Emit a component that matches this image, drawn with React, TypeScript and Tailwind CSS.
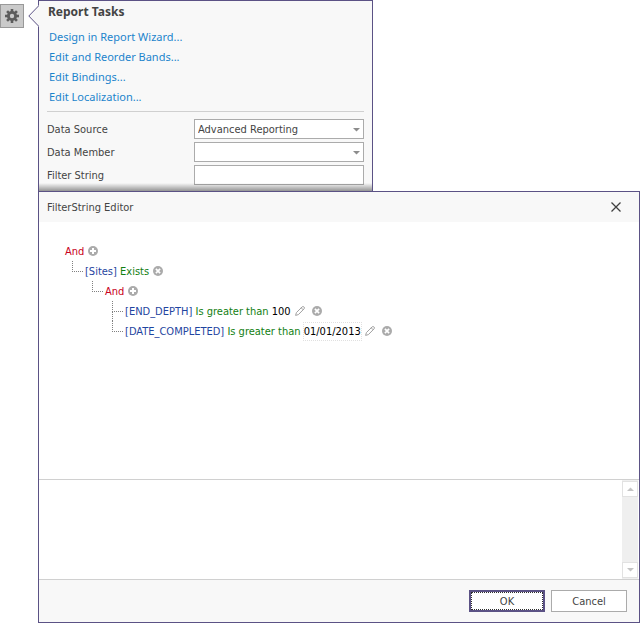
import React from "react";

const FONT = "font-['DejaVu_Sans_Condensed','DejaVu_Sans',sans-serif]";

function GearIcon() {
  return (
    <svg width="16" height="16" viewBox="0 0 16 16" aria-hidden="true">
      <g fill="#5c5c5c">
        {[0, 45, 90, 135].map((angle) => (
          <rect key={angle} x="6.7" y="1" width="2.6" height="14" transform={`rotate(${angle} 8 8)`} />
        ))}
        <circle cx="8" cy="8" r="5" />
      </g>
      <circle cx="8" cy="8" r="2.2" fill="#cacaca" />
    </svg>
  );
}

function AddIcon() {
  return (
    <svg width="10" height="10" viewBox="0 0 10 10" aria-hidden="true">
      <circle cx="5" cy="5" r="5" fill="#ababab" />
      <path d="M5 2v6M2 5h6" stroke="#fff" strokeWidth="2" />
    </svg>
  );
}

function RemoveIcon() {
  return (
    <svg width="10" height="10" viewBox="0 0 10 10" aria-hidden="true">
      <circle cx="5" cy="5" r="5" fill="#ababab" />
      <path d="M2.9 2.9l4.2 4.2M7.1 2.9l-4.2 4.2" stroke="#fff" strokeWidth="1.7" />
    </svg>
  );
}

function PencilIcon() {
  return (
    <svg width="10" height="10" viewBox="0 0 10 10" fill="none" stroke="#a0a0a0" aria-hidden="true">
      <path d="M0.6 9.4l0.8-2.8L7.2 0.8Q8.2 0.2 9.1 1Q9.7 1.9 9.1 2.8L3.4 8.6zM6.2 1.8l2 2" />
    </svg>
  );
}

function Triangle({ up = false, color }: { up?: boolean; color: string }) {
  return (
    <svg width="7" height="4" viewBox="0 0 7 4" aria-hidden="true">
      <path d={up ? "M0 4L3.5 0.5L7 4z" : "M0 0H7L3.5 3.5z"} fill={color} />
    </svg>
  );
}

function IconButton({ label, className = "", children }: { label: string; className?: string; children: React.ReactNode }) {
  return (
    <button type="button" aria-label={label} className={`block shrink-0 ${className}`}>
      {children}
    </button>
  );
}

function Branch({ more = false }: { more?: boolean }) {
  return (
    <span aria-hidden="true" className="mr-0.5 flex h-5 w-[11px] shrink-0 flex-col">
      <span className="h-[11px] border-b border-l border-dotted border-[#808080]" />
      {more && <span className="flex-1 border-l border-dotted border-[#808080]" />}
    </span>
  );
}

function SelectField({ id, label, options }: { id: string; label: string; options: string[] }) {
  return (
    <div className="flex h-5 items-center">
      <label htmlFor={id} className="w-[147px] shrink-0">{label}</label>
      <div className="relative h-5 flex-1">
        <select id={id} className="block h-5 w-full appearance-none border border-[#ababab] bg-white pt-px pr-5 pl-[3px] outline-none">
          {options.map((option) => <option key={option}>{option}</option>)}
        </select>
        <span className="pointer-events-none absolute top-[9px] right-1 block">
          <Triangle color="#8c8c8c" />
        </span>
      </div>
    </div>
  );
}

const TASKS = ["Design in Report Wizard...", "Edit and Reorder Bands...", "Edit Bindings...", "Edit Localization..."];

function ReportTasks() {
  return (
    <section className="relative w-[335px] border-x border-t border-[#5b5285] bg-[#f8f8f8] pr-2 pl-2">
      <svg className="absolute top-1 -left-[11px]" width="12" height="22" viewBox="0 0 12 22" aria-hidden="true">
        <path d="M12 0.5H10.5L0.8 11L10.5 21.5H12z" fill="#f8f8f8" />
        <path d="M10.5 1L0.8 11L10.5 21" fill="none" stroke="#5b5285" />
      </svg>
      <h2 className="pl-px font-['Noto_Sans',sans-serif] text-[12px] leading-[22px] font-bold">Report Tasks</h2>
      <ul className="mt-1 pl-0.5 font-['Noto_Sans',sans-serif] leading-5">
        {TASKS.map((task) => (
          <li key={task}><a href="#" className="text-[#1c84cc]">{task}</a></li>
        ))}
      </ul>
      <form className="mt-1 space-y-[3px] border-t border-[#d0d0d0] pt-[7px] pb-1.5">
        <SelectField id="source" label="Data Source" options={["Advanced Reporting"]} />
        <SelectField id="member" label="Data Member" options={[""]} />
        <div className="flex h-5 items-center">
          <label htmlFor="filter" className="w-[147px] shrink-0">Filter String</label>
          <input id="filter" type="text" className="h-5 min-w-0 flex-1 border border-[#ababab] bg-white px-[3px] outline-none" />
        </div>
      </form>
      <div aria-hidden="true" className="absolute inset-x-0 bottom-0 h-2 bg-linear-to-b from-transparent to-black/40" />
    </section>
  );
}

function Condition({ field, value, more = false, focused = false }: { field: string; value: string; more?: boolean; focused?: boolean }) {
  return (
    <li className="flex h-5 items-center pl-[73px]">
      <Branch more={more} />
      <span className="whitespace-pre"><span className="text-[#1f45a0]">[{field}]</span> <span className="text-[#128012]">Is greater than </span></span>
      <span className={`text-black ${focused ? "outline outline-dotted outline-[#e0e0e0]" : ""}`}>{value}</span>
      <IconButton label={`Edit ${field}`} className="ml-1"><PencilIcon /></IconButton>
      <IconButton label={`Remove ${field}`} className="ml-[7px]"><RemoveIcon /></IconButton>
    </li>
  );
}

function FilterEditor() {
  return (
    <section role="dialog" aria-label="FilterString Editor" className="flex flex-1 flex-col border border-[#5b5285] bg-white">
      <header className="flex h-[30px] items-center justify-between bg-[#f8f8f8] pr-[18px] pl-2">
        <h2>FilterString Editor</h2>
        <IconButton label="Close">
          <svg width="10" height="10" viewBox="0 0 10 10" stroke="#404040" strokeWidth="1.3" aria-hidden="true">
            <path d="M0.5 0.5l9 9M9.5 0.5l-9 9" />
          </svg>
        </IconButton>
      </header>
      <ul className="min-h-[238px] flex-1 pt-[19px]">
        <li className="flex h-5 items-center pl-[26px]">
          <span className="text-[#c80020]">And</span>
          <IconButton label="Add condition" className="ml-1"><AddIcon /></IconButton>
        </li>
        <li className="flex h-5 items-center pl-[33px]">
          <Branch />
          <span className="whitespace-pre"><span className="text-[#1f45a0]">[Sites]</span> <span className="text-[#128012]">Exists</span></span>
          <IconButton label="Remove Sites" className="ml-1"><RemoveIcon /></IconButton>
        </li>
        <li className="flex h-5 items-center pl-[53px]">
          <Branch />
          <span className="text-[#c80020]">And</span>
          <IconButton label="Add nested condition" className="ml-1"><AddIcon /></IconButton>
        </li>
        <Condition field="END_DEPTH" value="100" more />
        <Condition field="DATE_COMPLETED" value="01/01/2013" focused />
      </ul>
      <div className="flex h-[101px] border-y border-[#d0d0d0]">
        <textarea aria-label="Filter expression" className="min-w-0 flex-1 resize-none bg-white p-1 outline-none" />
        <div className="mr-px flex w-4 flex-col justify-between bg-[#efefef] py-px">
          <button type="button" aria-label="Scroll up" className="flex h-4 items-center justify-center border border-[#e2e2e2] bg-white"><Triangle up color="#c4c4c4" /></button>
          <button type="button" aria-label="Scroll down" className="flex h-4 items-center justify-center border border-[#e2e2e2] bg-white"><Triangle color="#c4c4c4" /></button>
        </div>
      </div>
      <footer className="flex justify-end gap-1.5 bg-[#f8f8f8] pt-2.5 pr-3 pb-2.5">
        <button type="button" className="h-[22px] w-[76px] border-2 border-[#5b5285] bg-white outline outline-dotted outline-offset-[-3px] outline-[#303030]">OK</button>
        <button type="button" className="h-[22px] w-[76px] border border-[#ababab] bg-white">Cancel</button>
      </footer>
    </section>
  );
}

export default function App() {
  return (
    <main className={`flex min-h-screen bg-white text-[11px] leading-[17px] text-[#444444] ${FONT}`}>
      <div className="w-[38px] shrink-0 pt-1">
        <button type="button" aria-label="Report tasks" className="flex size-6 items-center justify-center border border-[#999999] bg-[#cacaca]"><GearIcon /></button>
      </div>
      <div className="flex min-w-0 flex-1 flex-col">
        <ReportTasks />
        <FilterEditor />
      </div>
    </main>
  );
}
